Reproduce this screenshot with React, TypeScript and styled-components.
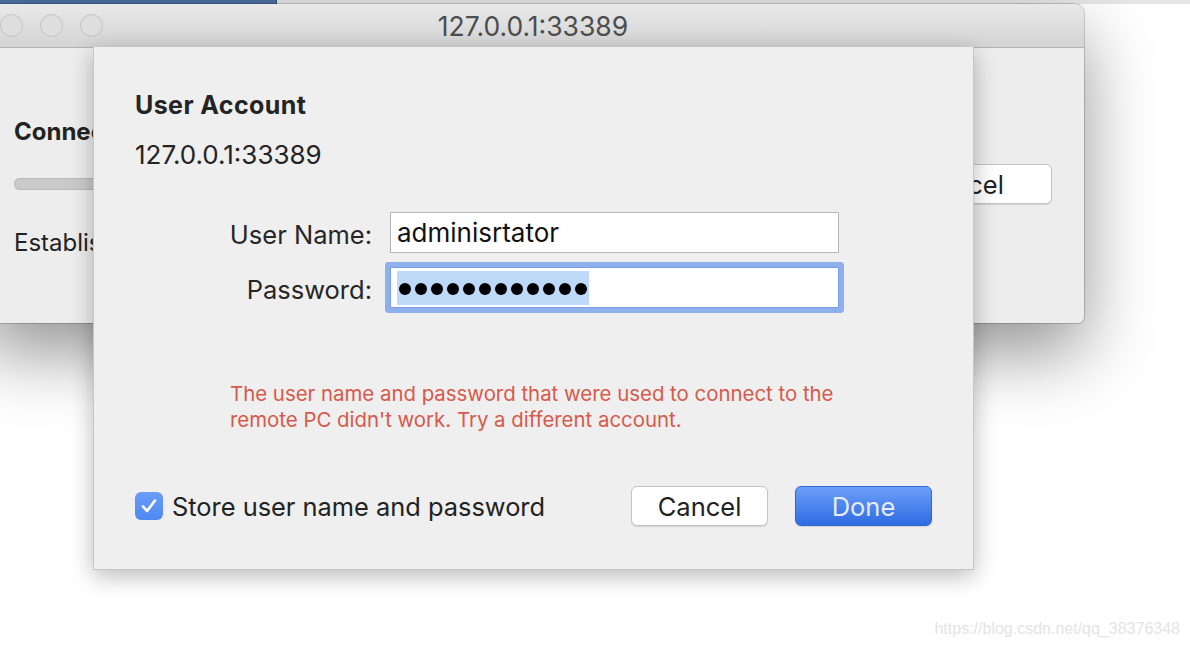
import React from 'react';
import styled, { createGlobalStyle } from 'styled-components';

const GlobalStyle = createGlobalStyle`
  html, body {
    margin: 0;
    padding: 0;
    background: #ffffff;
  }
  body {
    font-family: Inter, "Noto Sans", "Liberation Sans", sans-serif;
    color: #222;
  }
`;

const Desktop = styled.div`
  position: relative;
  width: 1190px;
  height: 646px;
  overflow: hidden;
  background: #ffffff;
`;

const TopStrip = styled.div`
  display: flex;
  height: 4px;
  background: #e6e6e6;
`;

const BlueTab = styled.div`
  width: 276px;
  background: #4c6e9f;
  border-right: 1px solid #35507a;
`;

const Window = styled.div`
  position: absolute;
  left: -18px;
  top: 4px;
  width: 1102px;
  height: 319px;
  border-radius: 10px 10px 6px 6px;
  background: #ededed;
  box-shadow: 0 0 0 1px rgba(0, 0, 0, 0.18), 0 30px 70px rgba(0, 0, 0, 0.42);
  display: flex;
  flex-direction: column;
  overflow: hidden;
`;

const TitleBar = styled.div`
  height: 43px;
  flex: none;
  display: flex;
  align-items: center;
  justify-content: center;
  position: relative;
  background: linear-gradient(#e9e9e9, #d4d4d4);
  border-bottom: 1px solid #b4b4b4;
`;

const Lights = styled.div`
  position: absolute;
  left: 18px;
  top: 10px;
  display: flex;
  gap: 17px;
`;

const Light = styled.span`
  width: 23px;
  height: 23px;
  border-radius: 50%;
  background: #dedede;
  border: 1px solid #c3c3c3;
  box-sizing: border-box;
`;

const TitleText = styled.span`
  font-size: 26.5px;
  color: #4d4d4d;
`;

const WindowBody = styled.div`
  flex: 1;
  display: flex;
  flex-direction: column;
  padding: 70px 32px 0 32px;
  position: relative;
`;

const ConnTitle = styled.div`
  font-size: 24px;
  font-weight: 700;
  color: #222;
  line-height: 28px;
  margin-top: 0;
`;

const ProgressRow = styled.div`
  display: flex;
  align-items: center;
  gap: 24px;
  margin-top: 18px;
`;

const Progress = styled.div`
  flex: 1;
  height: 12px;
  border-radius: 6px;
  background: #cacaca;
  box-shadow: inset 0 0 0 1px #b9b9b9;
`;

const Button = styled.button<{ $primary?: boolean }>`
  width: 137px;
  height: 40px;
  border-radius: 6px;
  font-family: inherit;
  font-size: 25.5px;
  padding: 0;
  cursor: default;
  border: 1px solid ${(p) => (p.$primary ? '#2f68d8' : '#c4c4c4')};
  color: ${(p) => (p.$primary ? '#e3ecfc' : '#222')};
  background: ${(p) =>
    p.$primary ? 'linear-gradient(#6c9ff8, #2f6be2)' : '#ffffff'};
  box-shadow: 0 1px 1px rgba(0, 0, 0, 0.12);
`;

const WinCancel = styled(Button)`
  width: 180px;
`;

const Status = styled.div`
  font-size: 24px;
  color: #222;
  margin-top: 24px;
`;

const Sheet = styled.div`
  position: absolute;
  left: 93px;
  top: 47px;
  width: 881px;
  height: 523px;
  box-sizing: border-box;
  background: #efefef;
  border: 1px solid #c6c6c6;
  border-top: none;
  box-shadow: 0 6px 22px rgba(0, 0, 0, 0.28);
  padding: 43px 41px 0 41px;
  display: flex;
  flex-direction: column;
`;

const SheetTitle = styled.div`
  font-size: 25px;
  font-weight: 700;
  letter-spacing: 0.4px;
  color: #242424;
  line-height: 30px;
`;

const Host = styled.div`
  font-size: 26px;
  color: #242424;
  line-height: 30px;
  margin-top: 20px;
`;

const Form = styled.div`
  display: grid;
  grid-template-columns: 237px 449px;
  column-gap: 18px;
  row-gap: 14px;
  align-items: center;
  margin-top: 42px;
`;

const Label = styled.label`
  font-size: 25.5px;
  color: #262626;
  text-align: right;
  padding-top: 3px;
`;

const Field = styled.div<{ $focused?: boolean }>`
  height: 41px;
  box-sizing: border-box;
  background: #ffffff;
  border: 1px solid #b7b7b7;
  display: flex;
  align-items: center;
  padding-left: 6px;
  font-size: 26px;
  color: #111;
  box-shadow: ${(p) => (p.$focused ? '0 0 0 5px #8eb0ec' : 'none')};
  border-radius: ${(p) => (p.$focused ? '1px' : '0')};
  border-color: ${(p) => (p.$focused ? '#7a9ee0' : '#b7b7b7')};
`;

const Selection = styled.span`
  background: #bfdaf9;
  height: 34px;
  display: flex;
  align-items: center;
  gap: 4px;
  padding: 2px 2px 0 2px;
  box-sizing: border-box;
`;

const Dot = styled.span`
  width: 12px;
  height: 12px;
  border-radius: 50%;
  background: #000;
`;

const ErrorText = styled.p`
  margin: 73px 0 0 95px;
  font-size: 20.4px;
  line-height: 26px;
  color: #d65a4b;
  width: 640px;
`;

const Footer = styled.div`
  display: flex;
  align-items: center;
  margin-top: 53px;
`;

const CheckRow = styled.label`
  display: flex;
  align-items: center;
  gap: 9px;
  font-size: 25.4px;
  color: #222;
  flex: 1;
`;

const Checkbox = styled.span`
  width: 28px;
  height: 28px;
  border-radius: 6px;
  background: linear-gradient(#6a9ef8, #4f87f2);
  display: flex;
  align-items: center;
  justify-content: center;
`;

const Buttons = styled.div`
  display: flex;
  gap: 27px;
`;

const Watermark = styled.div`
  position: absolute;
  right: 10px;
  bottom: 8px;
  font-family: "Liberation Sans", Arial, sans-serif;
  font-size: 16px;
  color: #e4e4e4;
`;

export default function App() {
  return (
    <>
      <GlobalStyle />
      <Desktop>
        <TopStrip>
          <BlueTab />
        </TopStrip>
        <Window>
          <TitleBar>
            <Lights>
              <Light />
              <Light />
              <Light />
            </Lights>
            <TitleText>127.0.0.1:33389</TitleText>
          </TitleBar>
          <WindowBody>
            <ConnTitle>Connecting to 127.0.0.1:33389</ConnTitle>
            <ProgressRow>
              <Progress />
              <WinCancel>Cancel</WinCancel>
            </ProgressRow>
            <Status>Establishing connection...</Status>
          </WindowBody>
        </Window>
        <Sheet>
          <SheetTitle>User Account</SheetTitle>
          <Host>127.0.0.1:33389</Host>
          <Form>
            <Label>User Name:</Label>
            <Field>adminisrtator</Field>
            <Label>Password:</Label>
            <Field $focused>
              <Selection>
                {Array.from({ length: 12 }).map((_, i) => (
                  <Dot key={i} />
                ))}
              </Selection>
            </Field>
          </Form>
          <ErrorText>
            The user name and password that were used to connect to the remote PC didn't work. Try a
            different account.
          </ErrorText>
          <Footer>
            <CheckRow>
              <Checkbox>
                <svg width="18" height="16" viewBox="0 0 18 16">
                  <path
                    d="M3 8.5 L7 13 L15 2.5"
                    fill="none"
                    stroke="#fff"
                    strokeWidth="2.6"
                    strokeLinecap="round"
                    strokeLinejoin="round"
                  />
                </svg>
              </Checkbox>
              Store user name and password
            </CheckRow>
            <Buttons>
              <Button>Cancel</Button>
              <Button $primary>Done</Button>
            </Buttons>
          </Footer>
        </Sheet>
        <Watermark>https://blog.csdn.net/qq_38376348</Watermark>
      </Desktop>
    </>
  );
}
